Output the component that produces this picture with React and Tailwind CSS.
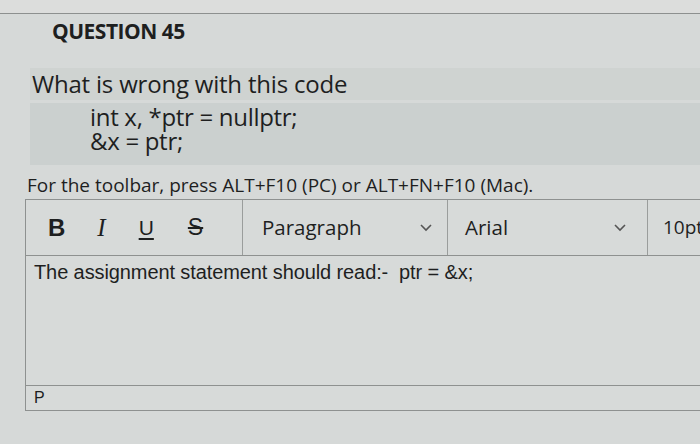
import React from "react";

function Chevron() {
  return (
    <svg width="14" height="10" viewBox="0 0 14 10" className="text-[#555]">
      <path d="M2 2 L7 7 L12 2" fill="none" stroke="currentColor" strokeWidth="1.6" />
    </svg>
  );
}

export default function App() {
  return (
    <div className="w-[700px] h-[444px] overflow-hidden bg-[#d6d9d8] text-[#1e1f1f] [font-family:'Open_Sans',sans-serif]">
      <div className="h-[14px] bg-[#dcdddc] border-b border-[#8d908f]"></div>
      <div className="pl-[52px] pt-[3px] h-[44px]">
        <div className="text-[21px] font-bold leading-[28px] tracking-[-0.5px]">QUESTION 45</div>
      </div>
      <div className="pl-[30px] mt-[10px]">
        <div className="bg-[#cfd3d1] h-[32px] flex items-center pl-[2px] text-[24px] tracking-[-0.2px] leading-[32px]">What is wrong with this code</div>
        <div className="bg-[#cbd0cf] h-[62px] mt-[3px] pl-[60px] pt-[2px] text-[24px] tracking-[-0.3px] leading-[24px]">
          <div>int x, *ptr = nullptr;</div>
          <div>&amp;x = ptr;</div>
        </div>
      </div>
      <div className="pl-[27px] mt-[8px] text-[19px] leading-[24px]">For the toolbar, press ALT+F10 (PC) or ALT+FN+F10 (Mac).</div>
      <div className="ml-[25px] mt-[2px] border-l border-t border-b border-[#8e9190] bg-[#d7dad9]">
        <div className="flex h-[56px] border-b border-[#8e9190]">
          <div className="w-[217px] flex items-center border-r border-[#9a9d9c] shrink-0">
            <span className="ml-[22px] text-[24px] font-bold [font-family:'Liberation_Sans',sans-serif]">B</span>
            <span className="ml-[32px] text-[25px] italic [font-family:'Liberation_Serif',serif]">I</span>
            <span className="ml-[33px] text-[21px] underline underline-offset-[3px] decoration-2 [font-family:'Liberation_Sans',sans-serif]">U</span>
            <span className="ml-[34px] text-[23px] line-through decoration-2 [font-family:'Liberation_Sans',sans-serif]">S</span>
          </div>
          <div className="w-[205px] flex items-center justify-between border-r border-[#9a9d9c] shrink-0 pl-[19px] pr-[14px]">
            <span className="text-[20.5px]">Paragraph</span>
            <Chevron />
          </div>
          <div className="w-[200px] flex items-center justify-between border-r border-[#9a9d9c] shrink-0 pl-[17px] pr-[20px]">
            <span className="text-[20.5px]">Arial</span>
            <Chevron />
          </div>
          <div className="flex items-center pl-[15px]">
            <span className="text-[19px] whitespace-nowrap">10pt</span>
          </div>
        </div>
        <div className="h-[130px] border-b border-[#8e9190] pl-[8px] pt-[4px]">
          <div className="text-[20px] leading-[24px] [font-family:'Liberation_Sans',sans-serif] tracking-[-0.1px]">The assignment statement should read:-&nbsp; ptr = &amp;x;</div>
        </div>
        <div className="h-[24px] pl-[8px] flex items-center text-[16px] [font-family:'Liberation_Sans',sans-serif]">P</div>
      </div>
    </div>
  );
}
